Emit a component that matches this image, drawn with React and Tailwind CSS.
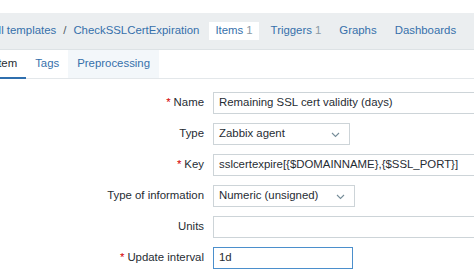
import React from 'react';

// Zabbix-style item edit form: breadcrumb nav, tabs and the first form rows.
const Chevron = () => (
  <svg width="9" height="6" viewBox="0 0 9 6" className="absolute right-[9px] top-[8px]">
    <path d="M1 1 L4.5 4.5 L8 1" fill="none" stroke="#768d99" strokeWidth="1.1" />
  </svg>
);

const Label = ({ required, children }) => (
  <div className="w-[204px] shrink-0 text-right text-[#1f2c33]">
    {required && <span className="text-[#d40000] mr-[3px]">*</span>}
    {children}
  </div>
);

const TextBox = ({ value, width, focused }) => (
  <div
    className={`h-[22px] flex items-center px-[5px] border bg-white text-[#1f2c33] whitespace-nowrap overflow-hidden ${
      focused ? 'border-[#4b8fcc]' : 'border-[#cdd4d8]'
    } ${width ? '' : 'flex-1'}`}
    style={width ? { width } : undefined}
  >
    {value}
  </div>
);

const SelectBox = ({ value, width }) => (
  <div
    className="relative h-[22px] flex items-center px-[5px] border border-[#cdd4d8] bg-white text-[#1f2c33]"
    style={{ width }}
  >
    {value}
    <Chevron />
  </div>
);

const App = () => {
  const rows = [
    { label: 'Name', required: true, el: <TextBox value="Remaining SSL cert validity (days)" /> },
    { label: 'Type', el: <SelectBox value="Zabbix agent" width={137} /> },
    { label: 'Key', required: true, el: <TextBox value="sslcertexpire[{$DOMAINNAME},{$SSL_PORT}]" /> },
    { label: 'Type of information', el: <SelectBox value="Numeric (unsigned)" width={142} /> },
    { label: 'Units', el: <TextBox value="" /> },
    { label: 'Update interval', required: true, el: <TextBox value="1d" width={140} focused /> },
  ];

  return (
    <div className="w-[474px] h-[277px] overflow-hidden bg-white text-[11.4px] font-['Liberation_Sans',Arial,sans-serif]">
      <div className="h-[13px]" />

      {/* Header nav */}
      <div className="h-[37px] bg-[#ebeef0] border-b border-[#dde2e5] flex items-center whitespace-nowrap">
        <span className="ml-[-9px] text-[#3670ab]">All templates</span>
        <span className="mx-[7px] text-[#4f5b62]">/</span>
        <span className="text-[#3670ab]">CheckSSLCertExpiration</span>
        <div className="flex items-center gap-[6px] ml-[10px]">
          <span className="h-[18px] flex items-center px-[6px] bg-white text-[#3670ab]">
            Items<span className="ml-[3px] text-[#8c9aa3]">1</span>
          </span>
          <span className="px-[6px] text-[#3670ab]">
            Triggers<span className="ml-[3px] text-[#8c9aa3]">1</span>
          </span>
          <span className="px-[6px] text-[#3670ab]">Graphs</span>
          <span className="px-[6px] text-[#3670ab]">Dashboards</span>
        </div>
      </div>

      {/* Tabs */}
      <div className="h-[29px] flex border-b border-[#e3e7ea] whitespace-nowrap">
        <div className="ml-[-14px] px-[9px] flex items-center text-[#1f2c33] border-b-2 border-[#2f6fae] mb-[-1px]">Item</div>
        <div className="px-[9px] flex items-center text-[#3670ab]">Tags</div>
        <div className="px-[9px] flex items-center text-[#3670ab] bg-[#f3f7fa]">Preprocessing</div>
      </div>

      {/* Form */}
      <div className="pt-[13px] flex flex-col gap-[9px]">
        {rows.map((r) => (
          <div key={r.label} className="flex items-center gap-[9px]">
            <Label required={r.required}>{r.label}</Label>
            <div className="flex-1 flex mr-[-20px]">{r.el}</div>
          </div>
        ))}
      </div>
    </div>
  );
};

export default App;
